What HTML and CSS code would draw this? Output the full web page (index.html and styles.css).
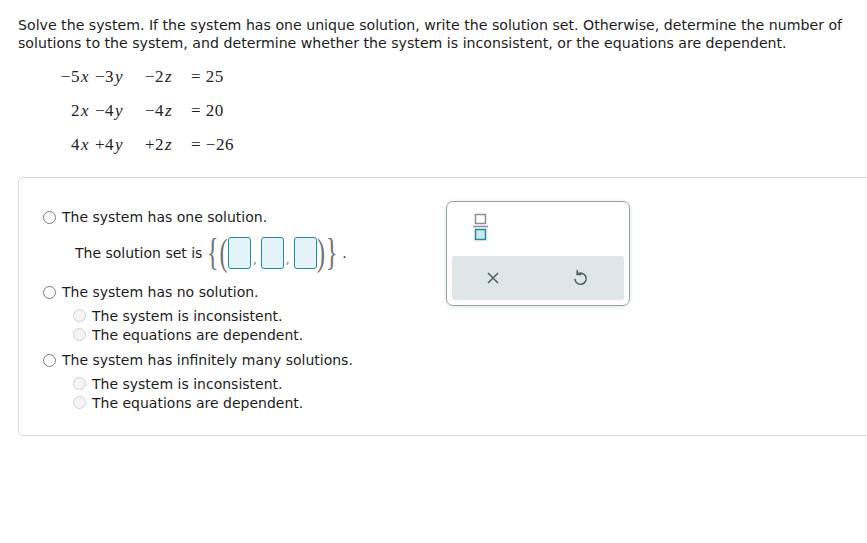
FILE: index.html
```html
<!DOCTYPE html>
<html lang="en">
<head>
    <meta charset="UTF-8">
    <title>Solve the system</title>
    <link rel="stylesheet" href="styles.css">
</head>
<body>
    <p class="prompt">Solve the system. If the system has one unique solution, write the solution set. Otherwise, determine the number of solutions to the system, and determine whether the system is inconsistent, or the equations are dependent.</p>

    <table class="system">
        <tr>
            <td class="c1">&minus;5<i>x</i></td>
            <td class="c2">&minus;3<i>y</i></td>
            <td class="c3">&minus;2<i>z</i></td>
            <td class="c4">= 25</td>
        </tr>
        <tr>
            <td class="c1">2<i>x</i></td>
            <td class="c2">&minus;4<i>y</i></td>
            <td class="c3">&minus;4<i>z</i></td>
            <td class="c4">= 20</td>
        </tr>
        <tr>
            <td class="c1">4<i>x</i></td>
            <td class="c2">+4<i>y</i></td>
            <td class="c3">+2<i>z</i></td>
            <td class="c4">= &minus;26</td>
        </tr>
    </table>

    <div class="answer-panel">
        <div class="options">
            <div class="option">
                <span class="radio"></span>
                <span>The system has one solution.</span>
            </div>
            <div class="solution-set">
                <span class="label">The solution set is</span>
                <span class="brace">{</span>
                <span class="brace">(</span>
                <span class="blank"></span>
                <span class="comma">,</span>
                <span class="blank"></span>
                <span class="comma">,</span>
                <span class="blank"></span>
                <span class="brace">)</span>
                <span class="brace">}</span>
                <span class="dot">.</span>
            </div>

            <div class="option">
                <span class="radio"></span>
                <span>The system has no solution.</span>
            </div>
            <div class="sub-options">
                <div class="sub-option"><span class="radio small"></span>The system is inconsistent.</div>
                <div class="sub-option"><span class="radio small"></span>The equations are dependent.</div>
            </div>

            <div class="option">
                <span class="radio"></span>
                <span>The system has infinitely many solutions.</span>
            </div>
            <div class="sub-options last">
                <div class="sub-option"><span class="radio small"></span>The system is inconsistent.</div>
                <div class="sub-option"><span class="radio small"></span>The equations are dependent.</div>
            </div>
        </div>

        <div class="palette">
            <div class="palette-keys">
                <svg width="18" height="30" viewBox="0 0 18 30">
                    <rect x="3.5" y="1.5" width="10" height="9" fill="#fff" stroke="#8a8f92" stroke-width="1.5"/>
                    <line x1="1" y1="13.5" x2="16" y2="13.5" stroke="#8a8f92" stroke-width="1.5"/>
                    <rect x="3.5" y="16.5" width="10" height="10" fill="#c9e9ef" stroke="#1f8a9b" stroke-width="1.5"/>
                </svg>
            </div>
            <div class="palette-actions">
                <svg width="14" height="14" viewBox="0 0 14 14">
                    <path d="M2 2 L12 12 M12 2 L2 12" stroke="#4d5e65" stroke-width="1.5" fill="none"/>
                </svg>
                <svg width="16" height="18" viewBox="0 0 16 18">
                    <path d="M5.2 5.2 A5.6 5.6 0 1 1 3 10.2" stroke="#4d5e65" stroke-width="1.5" fill="none" stroke-linecap="round"/>
                    <path d="M5.2 1.6 L5.2 5.6 L9 5.6" stroke="#4d5e65" stroke-width="1.5" fill="none" stroke-linecap="round" stroke-linejoin="round"/>
                </svg>
            </div>
        </div>
    </div>
</body>
</html>
```

FILE: styles.css
```css
body {
    margin: 0;
    padding: 16px 0 0 18px;
    font-family: "DejaVu Sans", Verdana, sans-serif;
    font-size: 14px;
    color: #1c1c1c;
    background-color: #fff;
    overflow: hidden;
}

.prompt {
    margin: 0;
    font-size: 14.15px;
    line-height: 18px;
}

.system {
    border-collapse: collapse;
    margin: 8px 0 0 38px;
    color: #222;
}

.system td {
    height: 34px;
    padding: 0;
    white-space: nowrap;
    font-family: "Liberation Serif", "Noto Serif", "DejaVu Serif", FreeSerif, "Nimbus Roman", Times, serif;
    font-size: 17px;
    letter-spacing: 0.5px;
}

.system i {
    padding-left: 1px;
}

.c1 {
    width: 33px;
    text-align: right;
}

.c2 {
    width: 50px;
    padding-left: 6px !important;
}

.c3 {
    width: 46px;
}

.answer-panel {
    display: flex;
    margin-top: 15px;
    margin-right: -20px;
    border: 1px solid #d3dbda;
    border-radius: 5px;
    padding: 23px 0 0 24px;
}

.options {
    width: 403px;
    padding-top: 7px;
}

.option {
    display: flex;
    align-items: center;
    gap: 6px;
    height: 18px;
}

.radio {
    display: inline-block;
    flex-shrink: 0;
    width: 11px;
    height: 11px;
    border: 1px solid #7b7b7b;
    border-radius: 50%;
    background-color: #fff;
}

.radio.small {
    border-color: #cfcfcf;
    background-color: #f5f5f5;
    margin-right: 6px;
}

.solution-set {
    display: flex;
    align-items: center;
    margin: 8px 0 11px 32px;
    height: 38px;
}

.label {
    margin-right: 4px;
}

.brace {
    font-family: "Liberation Serif", "Noto Serif", "DejaVu Serif", FreeSerif, Times, serif;
    font-size: 24px;
    line-height: 24px;
    color: #6f6f6f;
    transform: scaleY(1.55);
    margin: 0 0.5px;
}

.blank {
    width: 21px;
    height: 30px;
    border: 1.5px solid #1f8a9b;
    border-radius: 3px;
    background-color: #e4f3f7;
}

.comma {
    align-self: flex-end;
    margin: 0 4px 5px 2px;
    color: #777;
    font-size: 12px;
}

.dot {
    margin-left: 4px;
    font-size: 14px;
}

.sub-options {
    margin: 5px 0 7px 30px;
}

.sub-options.last {
    margin-bottom: 23px;
}

.sub-option {
    display: flex;
    align-items: center;
    height: 19px;
}

.palette {
    align-self: flex-start;
    width: 172px;
    height: 98px;
    border: 1px solid #91a3a8;
    border-radius: 7px;
    box-shadow: 0 1px 4px rgba(0, 0, 0, 0.12);
    padding: 0 5px 5px 5px;
    display: flex;
    flex-direction: column;
}

.palette-keys {
    height: 54px;
    padding: 11px 0 0 20px;
    box-sizing: border-box;
}

.palette-actions {
    flex: 1;
    display: flex;
    align-items: center;
    gap: 72px;
    background-color: #dfe6e8;
    border-radius: 3px;
    padding: 0 0 0 34px;
}
```
